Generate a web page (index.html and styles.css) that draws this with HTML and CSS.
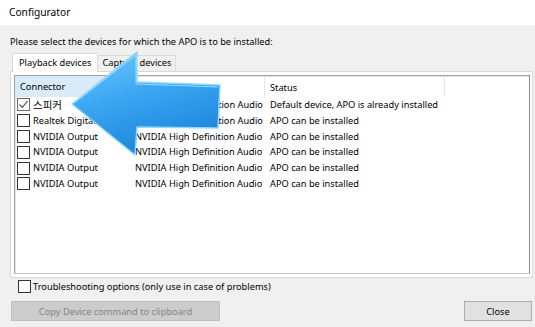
FILE: index.html
```html
<!DOCTYPE html>
<html lang="en">
<head>
    <meta charset="UTF-8">
    <title>Configurator</title>
    <link rel="stylesheet" href="styles.css">
</head>
<body>
    <div class="titlebar">Configurator</div>

    <div class="content">
        <p class="prompt">Please select the devices for which the APO is to be installed:</p>

        <div class="tabs">
            <div class="tab active">Playback devices</div>
            <div class="tab">Capture devices</div>
        </div>

        <div class="tab-panel">
            <div class="list">
                <div class="list-header">
                    <div class="col col-conn hot">Connector</div>
                    <div class="col col-dev">Device</div>
                    <div class="col col-status">Status</div>
                    <div class="col col-rest"></div>
                </div>
                <div class="row">
                    <div class="col col-conn"><span class="check checked"><svg width="11" height="11" viewBox="0 0 11 11"><path d="M1.5 5.5 L4.2 8.3 L9.6 2.2" fill="none" stroke="#555" stroke-width="1.2"/></svg></span><span class="kr">스피커</span></div>
                    <div class="col col-dev">Realtek High Definition Audio</div>
                    <div class="col col-status">Default device, APO is already installed</div>
                </div>
                <div class="row">
                    <div class="col col-conn"><span class="check"></span>Realtek Digital Output</div>
                    <div class="col col-dev">Realtek High Definition Audio</div>
                    <div class="col col-status">APO can be installed</div>
                </div>
                <div class="row">
                    <div class="col col-conn"><span class="check"></span>NVIDIA Output</div>
                    <div class="col col-dev">NVIDIA High Definition Audio</div>
                    <div class="col col-status">APO can be installed</div>
                </div>
                <div class="row">
                    <div class="col col-conn"><span class="check"></span>NVIDIA Output</div>
                    <div class="col col-dev">NVIDIA High Definition Audio</div>
                    <div class="col col-status">APO can be installed</div>
                </div>
                <div class="row">
                    <div class="col col-conn"><span class="check"></span>NVIDIA Output</div>
                    <div class="col col-dev">NVIDIA High Definition Audio</div>
                    <div class="col col-status">APO can be installed</div>
                </div>
                <div class="row">
                    <div class="col col-conn"><span class="check"></span>NVIDIA Output</div>
                    <div class="col col-dev">NVIDIA High Definition Audio</div>
                    <div class="col col-status">APO can be installed</div>
                </div>
            </div>
        </div>

        <label class="option"><span class="check"></span>Troubleshooting options (only use in case of problems)</label>

        <div class="buttons">
            <button class="btn disabled">Copy Device command to clipboard</button>
            <button class="btn close">Close</button>
        </div>
    </div>

    <!-- annotation arrow drawn over the dialog -->
    <svg class="arrow" width="535" height="327" viewBox="0 0 535 327">
        <defs>
            <linearGradient id="arrowFill" x1="0" y1="0" x2="0.4" y2="1">
                <stop offset="0" stop-color="#6fcbfb"/>
                <stop offset="0.5" stop-color="#3aa6f2"/>
                <stop offset="1" stop-color="#1e86dc"/>
            </linearGradient>
        </defs>
        <polygon points="72,104 137,52 137,82 220,85 218,128 137,127 135,155"
                 fill="url(#arrowFill)" stroke="#8fd8ff" stroke-width="1.5" stroke-linejoin="round"/>
        <polyline points="74,103 136,55 136,84 218,87" fill="none" stroke="#b5e6ff" stroke-width="1" opacity="0.8"/>
    </svg>
</body>
</html>
```

FILE: styles.css
```css
body {
    margin: 0;
    width: 535px;
    height: 327px;
    background-color: #f0f0f0;
    font-family: "Noto Sans", "Noto Sans CJK KR", sans-serif;
    font-size: 9.25px;
    color: #000;
    position: relative;
    overflow: hidden;
}

.titlebar {
    height: 25px;
    line-height: 24px;
    padding-left: 9px;
    background-color: #fff;
    font-size: 10.2px;
}

.content {
    padding: 0 2px 0 10px;
}

.prompt {
    margin: 9px 0 0 0;
    height: 15px;
    line-height: 15px;
}

.tabs {
    display: flex;
    margin-top: 4px;
    padding-left: 2px;
    height: 18px;
    align-items: flex-end;
}

.tab {
    height: 15px;
    line-height: 14px;
    padding: 0 4px;
    border: 1px solid #d9d9d9;
    border-bottom: none;
    background-color: #f0f0f0;
}

.tab.active {
    height: 18px;
    line-height: 18px;
    padding: 0 6px;
    background-color: #fff;
    border-right: none;
    position: relative;
    z-index: 1;
    margin-bottom: -1px;
}

.tab-panel {
    height: 202px;
    border: 1px solid #d9d9d9;
    background-color: #fff;
    padding: 3px 2px 0 3px;
}

.list {
    height: 197px;
    border: 1px solid #a0a0a0;
    border-right-color: #828790;
    border-bottom-color: #c8c8c8;
    box-shadow: inset 1px 1px 0 #e3e3e3;
    background-color: #fff;
    overflow: hidden;
}

.list-header {
    display: flex;
    height: 21px;
    line-height: 23px;
}

.list-header .col {
    border-right: 1px solid #e5e5e5;
    height: 21px;
}

.list-header .hot {
    background-color: #d9ebf9;
    border-right-color: #bcdcf4;
}

.list-header .col-rest {
    border-right: none;
    flex: 1;
}

.row {
    display: flex;
    height: 15.8px;
    line-height: 16px;
}

.col {
    padding-left: 5px;
    white-space: nowrap;
    overflow: hidden;
    box-sizing: border-box;
}

.col-conn {
    width: 115px;
    display: flex;
    align-items: center;
}

.row .col-conn {
    padding-left: 2px;
}

.col-dev {
    width: 135px;
}

.col-status {
    width: 180px;
}

.check {
    width: 13px;
    height: 13px;
    box-sizing: border-box;
    border: 1px solid #333;
    background-color: #fff;
    margin-right: 3px;
    flex-shrink: 0;
    display: inline-flex;
    align-items: center;
    justify-content: center;
}

.check.checked {
    border-color: #6a6a6a;
}

.kr {
    font-family: "Noto Sans CJK KR", sans-serif;
    font-size: 10.5px;
}

.option {
    display: flex;
    align-items: center;
    margin: 1px 0 0 8px;
    height: 14px;
}

.option .check {
    margin-right: 2px;
}

.buttons {
    display: flex;
    justify-content: space-between;
    margin-top: 8px;
    padding-right: 1px;
}

.btn {
    height: 20px;
    font-family: inherit;
    font-size: 9.25px;
    padding: 0;
    border: 1px solid #adadad;
    background-color: #e1e1e1;
    color: #000;
    margin: 0;
    margin-left: 1px;
}

.btn.disabled {
    width: 209px;
    background-color: #cccccc;
    border-color: #bfbfbf;
    color: #838383;
}

.btn.close {
    width: 68px;
}

.arrow {
    position: absolute;
    left: 0;
    top: 0;
    pointer-events: none;
}
```
